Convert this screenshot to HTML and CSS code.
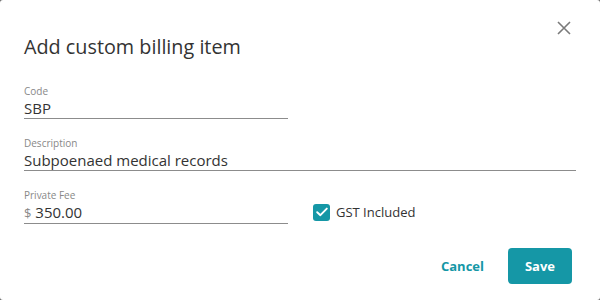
FILE: index.html
```html
<!DOCTYPE html>
<html>
<head>
<meta charset="utf-8">
<link rel="stylesheet" href="styles.css">
</head>
<body>
<div class="dialog">
  <div class="header">
    <h1 class="title">Add custom billing item</h1>
    <button class="close" aria-label="Close">
      <svg width="14" height="14" viewBox="0 0 14 14"><path d="M1 1L13 13M13 1L1 13" stroke="#7a7a7a" stroke-width="1.6" fill="none"/></svg>
    </button>
  </div>
  <div class="field short">
    <div class="label">Code</div>
    <div class="value">SBP</div>
  </div>
  <div class="field">
    <div class="label">Description</div>
    <div class="value">Subpoenaed medical records</div>
  </div>
  <div class="row">
    <div class="field short">
      <div class="label">Private Fee</div>
      <div class="value"><span class="currency">$</span> 350.00</div>
    </div>
    <label class="check">
      <span class="box"><svg width="12" height="10" viewBox="0 0 12 10"><path d="M1.2 5.2L4.4 8.2L10.8 1.6" stroke="#fff" stroke-width="1.9" fill="none" stroke-linecap="round" stroke-linejoin="round"/></svg></span>
      <span class="check-text">GST Included</span>
    </label>
  </div>
  <div class="footer">
    <button class="btn cancel">Cancel</button>
    <button class="btn save">Save</button>
  </div>
</div>
</body>
</html>
```

FILE: styles.css
```css
html, body {
  margin: 0;
  padding: 0;
  background: #6b6b6b;
}
body {
  width: 600px;
  height: 300px;
  font-family: "Open Sans", "Noto Sans", sans-serif;
  color: #333;
}
.dialog {
  box-sizing: border-box;
  width: 600px;
  height: 300px;
  background: #fff;
  border-radius: 3px;
  padding: 0 24px;
}
.header {
  display: flex;
  justify-content: space-between;
  align-items: flex-start;
}
.title {
  margin: 33px 0 0 0;
  font-size: 19.8px;
  line-height: 28px;
  font-weight: 400;
  color: #333;
}
.close {
  margin: 21px 5px 0 0;
  padding: 0;
  border: 0;
  background: none;
  width: 14px;
  height: 14px;
  display: block;
}
.close svg { display: block; }
.field {
  border-bottom: 1px solid #8c8c8c;
  margin-top: 17px;
}
.header + .field { margin-top: 23px; }
.field.short { width: 264px; }
.label {
  font-size: 10px;
  line-height: 14px;
  color: #888;
}
.value {
  font-size: 15px;
  line-height: 20px;
  color: #333;
}
.currency {
  color: #888;
  font-size: 13px;
}
.row {
  display: flex;
  align-items: flex-end;
  gap: 25px;
}
.row .field { flex: none; }
.check {
  display: flex;
  align-items: center;
  gap: 6px;
  height: 20px;
  margin-bottom: 2px;
}
.box {
  width: 17px;
  height: 17px;
  border-radius: 3px;
  background: #1597a6;
  display: flex;
  align-items: center;
  justify-content: center;
}
.box svg { display: block; }
.check-text {
  font-size: 13px;
  color: #333;
}
.footer {
  display: flex;
  justify-content: flex-end;
  align-items: center;
  gap: 4px;
  margin-top: 24px;
  padding-right: 4px;
}
.btn {
  font-family: inherit;
  font-size: 13px;
  font-weight: 700;
  border: 0;
  height: 36px;
  border-radius: 4px;
  cursor: pointer;
}
.cancel {
  background: none;
  color: #1597a6;
  padding: 0 20px;
}
.save {
  background: #1597a6;
  color: #fff;
  width: 64px;
  padding: 0;
}
```
